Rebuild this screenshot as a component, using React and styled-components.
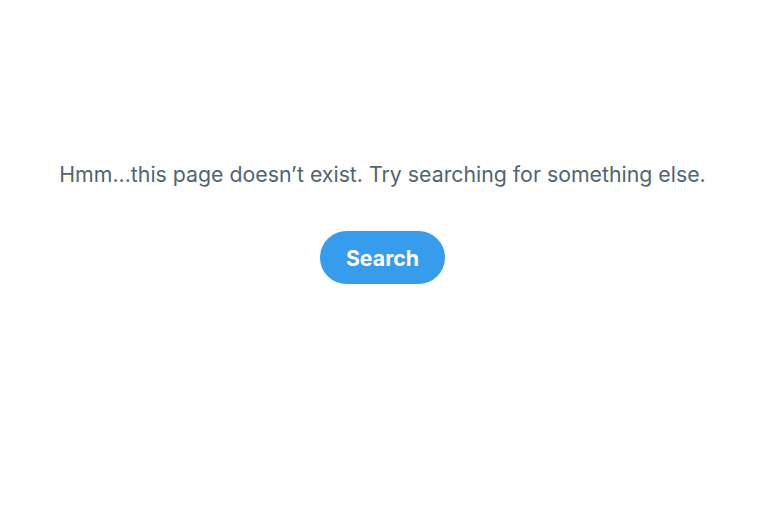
import { createGlobalStyle } from "styled-components";
import styled from "styled-components";

const GlobalStyle = createGlobalStyle`
  body {
    margin: 0;
    background: #ffffff;
    font-family: Inter, "Liberation Sans", sans-serif;
  }
`;

const Page = styled.div`
  height: 512px;
  display: flex;
  flex-direction: column;
  align-items: center;
  padding-top: 158px;
  padding-right: 3px;
  box-sizing: border-box;
`;

const Message = styled.p`
  margin: 0;
  color: #536471;
  font-size: 21.3px;
  line-height: 32px;
  text-align: center;
`;

const SearchButton = styled.button`
  margin-top: 41px;
  width: 125px;
  height: 53px;
  border: none;
  border-radius: 27px;
  background: #379ceb;
  color: #ffffff;
  font-family: inherit;
  font-size: 21.3px;
  font-weight: 700;
  cursor: pointer;
`;

export default function App() {
  return (
    <>
      <GlobalStyle />
      <Page>
        <Message>Hmm...this page doesn’t exist. Try searching for something else.</Message>
        <SearchButton>Search</SearchButton>
      </Page>
    </>
  );
}
